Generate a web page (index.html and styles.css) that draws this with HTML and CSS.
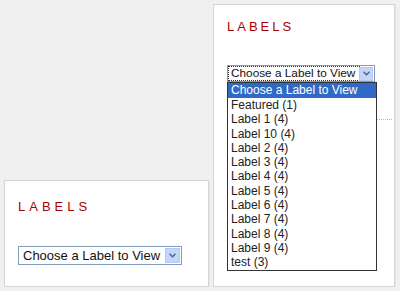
FILE: index.html
```html
<!DOCTYPE html>
<html lang="en">
<head>
    <meta charset="UTF-8">
    <title>Labels</title>
    <link rel="stylesheet" href="styles.css">
</head>
<body>

<div class="page">
    <div class="widget widget-small">
        <h2>Labels</h2>
        <div class="select select-big">
            <span class="select-text">Choose a Label to View</span>
            <span class="select-btn">
                <svg width="7" height="5" viewBox="0 0 7 5"><polyline points="0.5,0.8 3.5,3.8 6.5,0.8" fill="none" stroke="#4a5f8a" stroke-width="1.4"/></svg>
            </span>
        </div>
    </div>

    <div class="widget widget-tall">
        <h2>Labels</h2>
        <div class="select-wrap">
            <div class="select select-open">
                <span class="select-text focus">Choose a Label to View</span>
                <span class="select-btn">
                    <svg width="7" height="5" viewBox="0 0 7 5"><polyline points="0.5,0.8 3.5,3.8 6.5,0.8" fill="none" stroke="#4a5f8a" stroke-width="1.4"/></svg>
                </span>
            </div>
            <ul class="options">
                <li class="selected">Choose a Label to View</li>
                <li>Featured (1)</li>
                <li>Label 1 (4)</li>
                <li>Label 10 (4)</li>
                <li>Label 2 (4)</li>
                <li>Label 3 (4)</li>
                <li>Label 4 (4)</li>
                <li>Label 5 (4)</li>
                <li>Label 6 (4)</li>
                <li>Label 7 (4)</li>
                <li>Label 8 (4)</li>
                <li>Label 9 (4)</li>
                <li>test (3)</li>
            </ul>
        </div>
        <div class="separator"></div>
    </div>
</div>

</body>
</html>
```

FILE: styles.css
```css
body {
    margin: 0;
    background-color: #f0f0f0;
    font-family: "Liberation Sans", Arial, sans-serif;
}
.page {
    display: flex;
    align-items: flex-end;
    gap: 4px;
    padding: 4px 0 0 4px;
}
.widget {
    box-sizing: border-box;
    background-color: white;
    border: 1px solid #d6d6d6;
    box-shadow: 1px 1px 0 #e6e6e6;
    padding-left: 13px;
}
.widget h2 {
    margin: 0;
    font-size: 13px;
    line-height: 16px;
    font-weight: normal;
    text-transform: uppercase;
    letter-spacing: 3px;
    color: #a80000;
}
.widget-small {
    width: 205px;
    height: 107px;
    padding-top: 18px;
}
.widget-small h2 {
    letter-spacing: 4px;
}
.widget-tall {
    width: 182px;
    height: 283px;
    padding-top: 14px;
    padding-right: 2px;
}
.select {
    box-sizing: border-box;
    display: flex;
    align-items: center;
    background-color: white;
    border: 1px solid #7f9db9;
    color: #111;
}
.select-big {
    width: 164px;
    height: 19px;
    margin-top: 31px;
    font-size: 13px;
}
.select-text {
    flex: 1;
    padding-left: 4px;
    white-space: nowrap;
    overflow: hidden;
}
.select-btn {
    display: flex;
    align-items: center;
    justify-content: center;
    width: 15px;
    height: 15px;
    margin-right: 1px;
    background-color: #c4d5fb;
    border: 1px solid #b3c8f3;
    box-sizing: border-box;
}
.select-wrap {
    position: relative;
    width: 148px;
    margin-top: 30px;
}
.select-open {
    height: 17px;
    font-size: 11.8px;
    border-color: #8a9aae;
}
.select-open .select-text {
    padding-left: 2px;
    margin-left: 1px;
    outline: 1px dotted #333;
    line-height: 13px;
}
.select-open .select-btn {
    width: 14px;
    height: 14px;
}
.options {
    position: absolute;
    top: 17px;
    left: 0;
    width: 150px;
    box-sizing: border-box;
    margin: 0;
    padding: 0;
    list-style: none;
    background-color: white;
    border: 1px solid #333;
    font-size: 12px;
    color: #222;
}
.options li {
    height: 14.3px;
    line-height: 14.3px;
    padding-left: 3px;
    white-space: nowrap;
}
.options li.selected {
    height: 15px;
    line-height: 15px;
    background-color: #316ac5;
    color: white;
}
.separator {
    margin-top: 37px;
    border-top: 1px dotted #b8b8b8;
}
```
